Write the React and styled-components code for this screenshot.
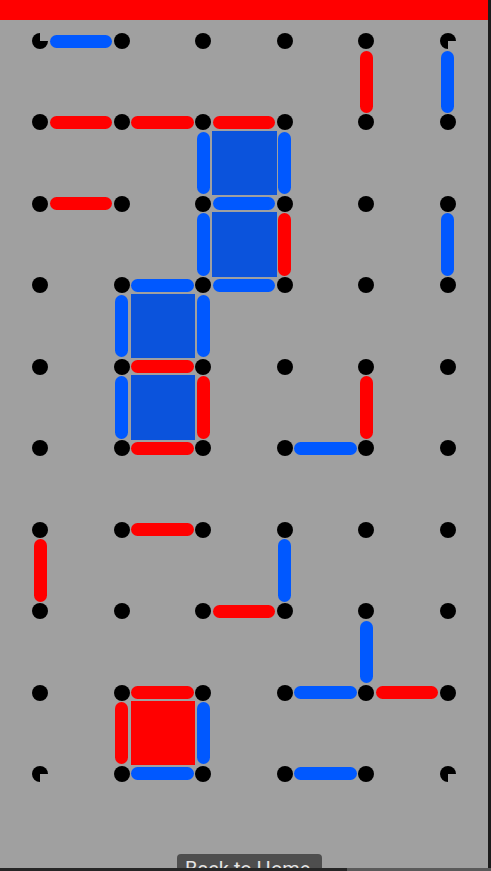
import React from 'react';
import styled, { createGlobalStyle } from 'styled-components';

const GlobalStyle = createGlobalStyle`
  html, body {
    margin: 0;
    padding: 0;
    background: #a0a0a0;
    font-family: Roboto, "Liberation Sans", sans-serif;
  }
`;

const RED = '#ff0000';
const BLUE = '#0058ff';
const BOX_BLUE = '#0b53dc';

const Screen = styled.div`
  width: 491px;
  height: 871px;
  display: flex;
  flex-direction: column;
  overflow: hidden;
`;

const Main = styled.div`
  flex: 1;
  display: flex;
  min-height: 0;
`;

const Content = styled.div`
  flex: 1;
  display: flex;
  flex-direction: column;
  background: #a0a0a0;
  overflow: hidden;
`;

const VScroll = styled.div`
  width: 3px;
  background: #1c1c1c;
`;

const HScroll = styled.div`
  height: 3px;
  display: flex;
  background: #5a5a5a;
`;

const HThumb = styled.div`
  width: 347px;
  background: #262626;
`;

const TopBar = styled.div`
  height: 20px;
  flex-shrink: 0;
  background: ${RED};
`;

const Board = styled.div`
  margin: 13px auto 0;
  width: 424px;
  height: 749px;
  flex-shrink: 0;
  display: grid;
  grid-template-columns: repeat(5, 16px 1fr) 16px;
  grid-template-rows: repeat(9, 16px 1fr) 16px;
`;

const Dot = styled.div`
  width: 16px;
  height: 16px;
  border-radius: 50%;
  background: ${({ $notch }) =>
    $notch == null
      ? '#000'
      : `conic-gradient(from ${$notch}deg, transparent 0 90deg, #000 90deg 360deg)`};
`;

const Slot = styled.div`
  display: flex;
  align-items: center;
  justify-content: center;
`;

const HLine = styled.div`
  width: calc(100% - 3px);
  height: 13px;
  border-radius: 7px;
  background: ${({ $color }) => $color};
`;

const VLine = styled.div`
  width: 13px;
  height: calc(100% - 3px);
  border-radius: 7px;
  background: ${({ $color }) => $color};
`;

const Box = styled.div`
  width: calc(100% - 1px);
  height: calc(100% - 1px);
  margin-left: 1px;
  background: ${({ $color }) => $color};
`;

const ButtonRow = styled.div`
  display: flex;
  justify-content: center;
  padding-left: 11px;
  margin-top: 72px;
`;

const HomeButton = styled.button`
  width: 145px;
  border: none;
  border-radius: 4px;
  background: #4e4e4e;
  color: #e4e4e4;
  font-family: Roboto, "Liberation Sans", sans-serif;
  font-size: 20px;
  line-height: 24px;
  padding: 3px 8px 8px;
  text-align: left;
`;

// dot rows 0..9, dot cols 0..5
const R = RED;
const B = BLUE;

const hEdges = {
  '0-0': B,
  '1-0': R, '1-1': R, '1-2': R,
  '2-0': R, '2-2': B,
  '3-1': B, '3-2': B,
  '4-1': R,
  '5-1': R, '5-3': B,
  '6-1': R,
  '7-2': R,
  '8-1': R, '8-3': B, '8-4': R,
  '9-1': B, '9-3': B,
};

const vEdges = {
  '0-4': R, '0-5': B,
  '1-2': B, '1-3': B,
  '2-2': B, '2-3': R, '2-5': B,
  '3-1': B, '3-2': B,
  '4-1': B, '4-2': R, '4-4': R,
  '6-0': R, '6-3': B,
  '7-4': B,
  '8-1': R, '8-2': B,
};

const boxes = {
  '1-2': BOX_BLUE,
  '2-2': BOX_BLUE,
  '3-1': BOX_BLUE,
  '4-1': BOX_BLUE,
  '8-1': RED,
};

const corners = {
  '0-0': 0,
  '0-5': 90,
  '9-0': 90,
  '9-5': 90,
};

const ROWS = 10;
const COLS = 6;

function renderCell(gr, gc) {
  const key = `${gr}-${gc}`;
  const r = Math.floor(gr / 2);
  const c = Math.floor(gc / 2);
  const id = `${r}-${c}`;
  const onDotRow = gr % 2 === 0;
  const onDotCol = gc % 2 === 0;

  if (onDotRow && onDotCol) return <Dot key={key} $notch={corners[id]} />;
  if (onDotRow) {
    return <Slot key={key}>{hEdges[id] && <HLine $color={hEdges[id]} />}</Slot>;
  }
  if (onDotCol) {
    return <Slot key={key}>{vEdges[id] && <VLine $color={vEdges[id]} />}</Slot>;
  }
  return <Slot key={key}>{boxes[id] && <Box $color={boxes[id]} />}</Slot>;
}

export default function App() {
  const cells = [];
  for (let gr = 0; gr < ROWS * 2 - 1; gr++) {
    for (let gc = 0; gc < COLS * 2 - 1; gc++) {
      cells.push(renderCell(gr, gc));
    }
  }

  return (
    <>
      <GlobalStyle />
      <Screen>
        <Main>
          <Content>
            <TopBar />
            <Board>{cells}</Board>
            <ButtonRow>
              <HomeButton>Back to Home</HomeButton>
            </ButtonRow>
          </Content>
          <VScroll />
        </Main>
        <HScroll>
          <HThumb />
        </HScroll>
      </Screen>
    </>
  );
}
